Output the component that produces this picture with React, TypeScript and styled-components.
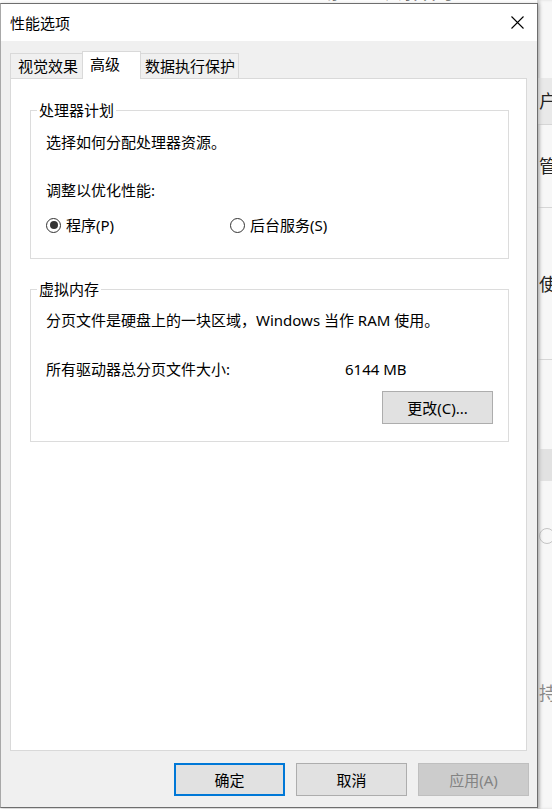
import React from "react";
import styled, { createGlobalStyle } from "styled-components";

const GlobalStyle = createGlobalStyle`
  html, body {
    margin: 0;
    padding: 0;
    background: #ffffff;
  }
  body {
    width: 552px;
    height: 809px;
    overflow: hidden;
    font-family: "Noto Sans", "Noto Sans CJK SC", sans-serif;
  }
  * {
    box-sizing: border-box;
  }
`;

const FONT = `"Noto Sans", "Noto Sans CJK SC", sans-serif`;

const Desktop = styled.div`
  position: relative;
  width: 552px;
  height: 809px;
  overflow: hidden;
  background: #ffffff;
  font-family: ${FONT};
`;

/* windows lying behind the dialog */
const BehindTop = styled.div`
  position: absolute;
  left: 326px;
  top: -23px;
  font-size: 24px;
  line-height: 24px;
  color: #222;
  letter-spacing: 2px;
  white-space: nowrap;
`;

const BehindWindow = styled.div`
  position: absolute;
  left: 537px;
  top: 0;
  width: 40px;
  height: 809px;
  background: #f7f7f7;
  display: flex;
  flex-direction: column;
  box-shadow: inset 3px 0 3px rgba(0, 0, 0, 0.12);
`;

const BehindRow = styled.div<{ $h: number; $bg?: string; $line?: boolean }>`
  height: ${(p) => p.$h}px;
  flex: none;
  background: ${(p) => p.$bg || "transparent"};
  border-bottom: ${(p) => (p.$line ? "1px solid #d6d6d6" : "none")};
  display: flex;
  align-items: center;
  padding-left: 2px;
  white-space: nowrap;
`;

const BehindText = styled.span<{ $muted?: boolean }>`
  color: ${(p) => (p.$muted ? "#8a8a8a" : "#222")};
  font-size: 18px;
  line-height: 20px;
`;

const BehindRadio = styled.span`
  display: inline-block;
  width: 16px;
  height: 16px;
  border: 1px solid #c4c4c4;
  border-radius: 50%;
`;

/* dialog */
const Dialog = styled.div`
  position: absolute;
  left: 0;
  top: 3px;
  width: 538px;
  height: 805px;
  border: 1px solid #6e6e6e;
  border-left-color: #a8a8a8;
  background: #f0f0f0;
  display: flex;
  flex-direction: column;
  color: #000;
  font-size: 15px;
  box-shadow: 1px 1px 4px rgba(0, 0, 0, 0.25);
`;

const TitleBar = styled.div`
  height: 37px;
  flex: none;
  background: #ffffff;
  display: flex;
  align-items: center;
  justify-content: space-between;
  padding: 0 13px 0 9px;
`;

const Title = styled.span`
  font-size: 15px;
  line-height: 20px;
`;

const CloseButton = styled.span`
  display: flex;
  width: 13px;
  height: 13px;
`;

const Body = styled.div`
  display: flex;
  flex-direction: column;
  padding: 10px 10px 0 9px;
`;

const TabRow = styled.div`
  display: flex;
  align-items: flex-end;
  height: 28px;
  margin-bottom: -1px;
  position: relative;
  z-index: 1;
`;

const Tab = styled.div<{ $active?: boolean; $first?: boolean; $w: number; $pl: number }>`
  position: relative;
  z-index: ${(p) => (p.$active ? 2 : 1)};
  width: ${(p) => p.$w}px;
  height: ${(p) => (p.$active ? 28 : 25)}px;
  margin-bottom: ${(p) => (p.$active ? 0 : 1)}px;
  margin-left: ${(p) => (p.$first ? 0 : -2)}px;
  padding-left: ${(p) => p.$pl}px;
  padding-bottom: ${(p) => (p.$active ? 3 : 1)}px;
  background: ${(p) => (p.$active ? "#ffffff" : "#f0f0f0")};
  border: 1px solid #d9d9d9;
  border-bottom: none;
  display: flex;
  align-items: center;
  font-size: 15px;
  line-height: 20px;
  white-space: nowrap;
`;

const Panel = styled.div`
  height: 673px;
  background: #ffffff;
  border: 1px solid #d9d9d9;
  padding: 21px 17px 0 19px;
  display: flex;
  flex-direction: column;
`;

const Group = styled.fieldset<{ $gap?: number }>`
  margin: ${(p) => p.$gap || 0}px 0 0 0;
  padding: 0;
  min-width: 0;
  border: 1px solid #dcdcdc;
`;

const Legend = styled.legend`
  margin-left: 6px;
  padding: 0 2px;
  font-size: 15px;
  line-height: 20px;
`;

const GroupBody = styled.div<{ $pb: number }>`
  display: flex;
  flex-direction: column;
  padding: 0 15px ${(p) => p.$pb}px 15px;
`;

const Line = styled.div<{ $mt: number }>`
  margin-top: ${(p) => p.$mt}px;
  font-size: 15px;
  line-height: 20px;
  white-space: nowrap;
`;

const RadioRow = styled.div`
  margin-top: 15px;
  display: grid;
  grid-template-columns: 184px auto;
  height: 20px;
`;

const RadioItem = styled.label`
  display: flex;
  align-items: center;
  gap: 5px;
  font-size: 15px;
  line-height: 20px;
`;

const RadioCircle = styled.span<{ $checked?: boolean }>`
  width: 15px;
  height: 15px;
  border: 1px solid #333333;
  border-radius: 50%;
  display: flex;
  align-items: center;
  justify-content: center;
  &::after {
    content: "";
    width: 8px;
    height: 8px;
    border-radius: 50%;
    background: ${(p) => (p.$checked ? "#333333" : "transparent")};
  }
`;

const SizeRow = styled.div`
  margin-top: 29px;
  display: grid;
  grid-template-columns: 299px auto;
  font-size: 15px;
  line-height: 20px;
`;

const ButtonRow = styled.div`
  margin-top: 12px;
  display: flex;
  justify-content: flex-end;
`;

const Button = styled.button<{ $primary?: boolean; $disabled?: boolean }>`
  width: 111px;
  height: 33px;
  padding: 0;
  font-family: ${FONT};
  font-size: 15px;
  line-height: 20px;
  color: ${(p) => (p.$disabled ? "#838383" : "#000000")};
  background: ${(p) => (p.$disabled ? "#cccccc" : "#e1e1e1")};
  border: ${(p) =>
    p.$primary
      ? "2px solid #0078d7"
      : p.$disabled
      ? "1px solid #bfbfbf"
      : "1px solid #adadad"};
  border-radius: 0;
  outline: none;
`;

const Footer = styled.div`
  display: flex;
  justify-content: flex-end;
  gap: 11px;
  padding: 12px 8px 0 0;
`;

const CloseIcon = () => (
  <svg width="13" height="13" viewBox="0 0 13 13">
    <path d="M0.5 0.5 L12.5 12.5 M12.5 0.5 L0.5 12.5" stroke="#000" strokeWidth="1.1" fill="none" />
  </svg>
);

export default function App() {
  return (
    <Desktop>
      <GlobalStyle />
      <BehindTop>能选项指南</BehindTop>
      <BehindWindow>
        <BehindRow $h={78} />
        <BehindRow $h={47} $bg="#e9e9e9" $line>
          <BehindText>户</BehindText>
        </BehindRow>
        <BehindRow $h={83} $line>
          <BehindText>管理</BehindText>
        </BehindRow>
        <BehindRow $h={152} $line>
          <BehindText>使用</BehindText>
        </BehindRow>
        <BehindRow $h={89} />
        <BehindRow $h={32} $bg="#e2e2e2" />
        <BehindRow $h={110}>
          <BehindRadio />
        </BehindRow>
        <BehindRow $h={92} />
        <BehindRow $h={20}>
          <BehindText $muted>持</BehindText>
        </BehindRow>
      </BehindWindow>

      <Dialog>
        <TitleBar>
          <Title>性能选项</Title>
          <CloseButton>
            <CloseIcon />
          </CloseButton>
        </TitleBar>
        <Body>
          <TabRow>
            <Tab $w={74} $pl={7} $first>
              视觉效果
            </Tab>
            <Tab $w={59} $pl={7} $active>
              高级
            </Tab>
            <Tab $w={100} $pl={5}>
              数据执行保护
            </Tab>
          </TabRow>
          <Panel>
            <Group>
              <Legend>处理器计划</Legend>
              <GroupBody $pb={23}>
                <Line $mt={12}>选择如何分配处理器资源。</Line>
                <Line $mt={28}>调整以优化性能:</Line>
                <RadioRow>
                  <RadioItem>
                    <RadioCircle $checked />
                    程序(P)
                  </RadioItem>
                  <RadioItem>
                    <RadioCircle />
                    后台服务(S)
                  </RadioItem>
                </RadioRow>
              </GroupBody>
            </Group>
            <Group $gap={20}>
              <Legend>虚拟内存</Legend>
              <GroupBody $pb={17}>
                <Line $mt={11}>分页文件是硬盘上的一块区域，Windows 当作 RAM 使用。</Line>
                <SizeRow>
                  <span>所有驱动器总分页文件大小:</span>
                  <span>6144 MB</span>
                </SizeRow>
                <ButtonRow>
                  <Button>更改(C)...</Button>
                </ButtonRow>
              </GroupBody>
            </Group>
          </Panel>
        </Body>
        <Footer>
          <Button $primary>确定</Button>
          <Button>取消</Button>
          <Button $disabled>应用(A)</Button>
        </Footer>
      </Dialog>
    </Desktop>
  );
}
